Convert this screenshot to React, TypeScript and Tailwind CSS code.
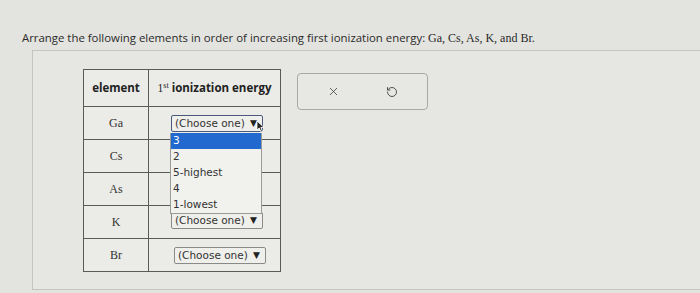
import React from "react";
import { X, RotateCcw } from "lucide-react";

const sans = { fontFamily: '"Open Sans", "Liberation Sans", sans-serif' };

function Select({ focused = false, hidden = false }: { focused?: boolean; hidden?: boolean }) {
  return (
    <div
      className={`flex h-[17px] w-[92px] items-center justify-between rounded-[2px] border bg-[#efefec] pl-[3px] pr-[5px] text-[10.5px] leading-none text-[#333] ${
        focused ? "border-[#4a5a7a]" : "border-[#8a8a88]"
      } ${hidden ? "invisible" : ""}`}
      style={{ fontFamily: '"DejaVu Sans", sans-serif' }}
    >
      <span>(Choose one)</span>
      <span className="text-[9px] text-[#222]">▼</span>
    </div>
  );
}

const rows = ["Ga", "Cs", "As", "K", "Br"];
const options = ["3", "2", "5-highest", "4", "1-lowest"];

export default function App() {
  return (
    <div className="relative h-[293px] w-[700px] overflow-hidden bg-[#e3e3df]">
      <div
        className="pl-[22px] pt-[29px] text-[11.4px] text-[#2a2a2a]"
        style={sans}
      >
        Arrange the following elements in order of increasing first ionization energy:{" "}
        <span className="text-[12px]" style={{ fontFamily: '"Liberation Serif", serif' }}>
          Ga, Cs, As, K, and Br.
        </span>
      </div>

      <div className="ml-[32px] mt-[3px] h-[240px] border-l border-t border-b border-[#c4c4c0] bg-[#e6e6e2]">
        <div className="ml-[50px] mt-[18px] flex items-start">
          <div className="relative">
            <table className="border-collapse bg-[#ebebe7]">
              <thead>
                <tr className="h-[37px]">
                  <th
                    className="w-[65px] border border-[#5a5a58] text-[11.5px] font-bold text-[#222]"
                    style={sans}
                  >
                    element
                  </th>
                  <th
                    className="w-[132px] border border-[#5a5a58] text-[11.5px] font-bold text-[#222]"
                    style={sans}
                  >
                    <span className="font-normal" style={{ fontFamily: '"Liberation Serif", serif' }}>
                      1<sup className="text-[8px]">st</sup>
                    </span>{" "}
                    ionization energy
                  </th>
                </tr>
              </thead>
              <tbody>
                {rows.map((r, i) => (
                  <tr key={r} className="h-[33px]">
                    <td
                      className="border border-[#5a5a58] text-center text-[12px] text-[#333]"
                      style={{ fontFamily: '"Liberation Serif", serif' }}
                    >
                      {r}
                    </td>
                    <td className="border border-[#5a5a58]">
                      <div className={`flex ${i === 4 ? "pl-[25px]" : "pl-[22px]"} ${i === 3 ? "pb-[3px]" : ""}`}>
                        <Select focused={i === 0} hidden={i === 1 || i === 2} />
                      </div>
                    </td>
                  </tr>
                ))}
              </tbody>
            </table>

            {/* open dropdown list */}
            <div
              className="absolute left-[87px] top-[64px] w-[92px] border border-[#9a9a98] border-t-0 bg-[#f1f1ee] text-[10.5px] text-[#333]"
              style={{ fontFamily: '"DejaVu Sans", sans-serif' }}
            >
              {options.map((o, i) => (
                <div
                  key={o}
                  className={`flex h-[16px] items-center pl-[2px] ${
                    i === 0 ? "bg-[#2168cf] text-white" : ""
                  }`}
                >
                  {o}
                </div>
              ))}
            </div>

            {/* mouse cursor */}
            <svg
              className="absolute left-[173px] top-[51px]"
              width="9"
              height="13"
              viewBox="0 0 9 13"
            >
              <path d="M1 1 L1 10 L3.3 8 L5 12 L6.5 11.3 L4.8 7.5 L8 7.5 Z" fill="#222" stroke="#fff" strokeWidth="0.8" />
            </svg>
          </div>

          <div className="ml-[16px] mt-[4px] flex h-[37px] w-[131px] items-center rounded-[4px] border border-[#a8a8a4] bg-[#e7e7e3] text-[#4a4a4a]">
            <div className="flex w-[70px] justify-center">
              <X size={13} strokeWidth={1.6} />
            </div>
            <div className="flex w-[48px] justify-center">
              <RotateCcw size={12} strokeWidth={1.9} />
            </div>
          </div>
        </div>
      </div>
    </div>
  );
}
